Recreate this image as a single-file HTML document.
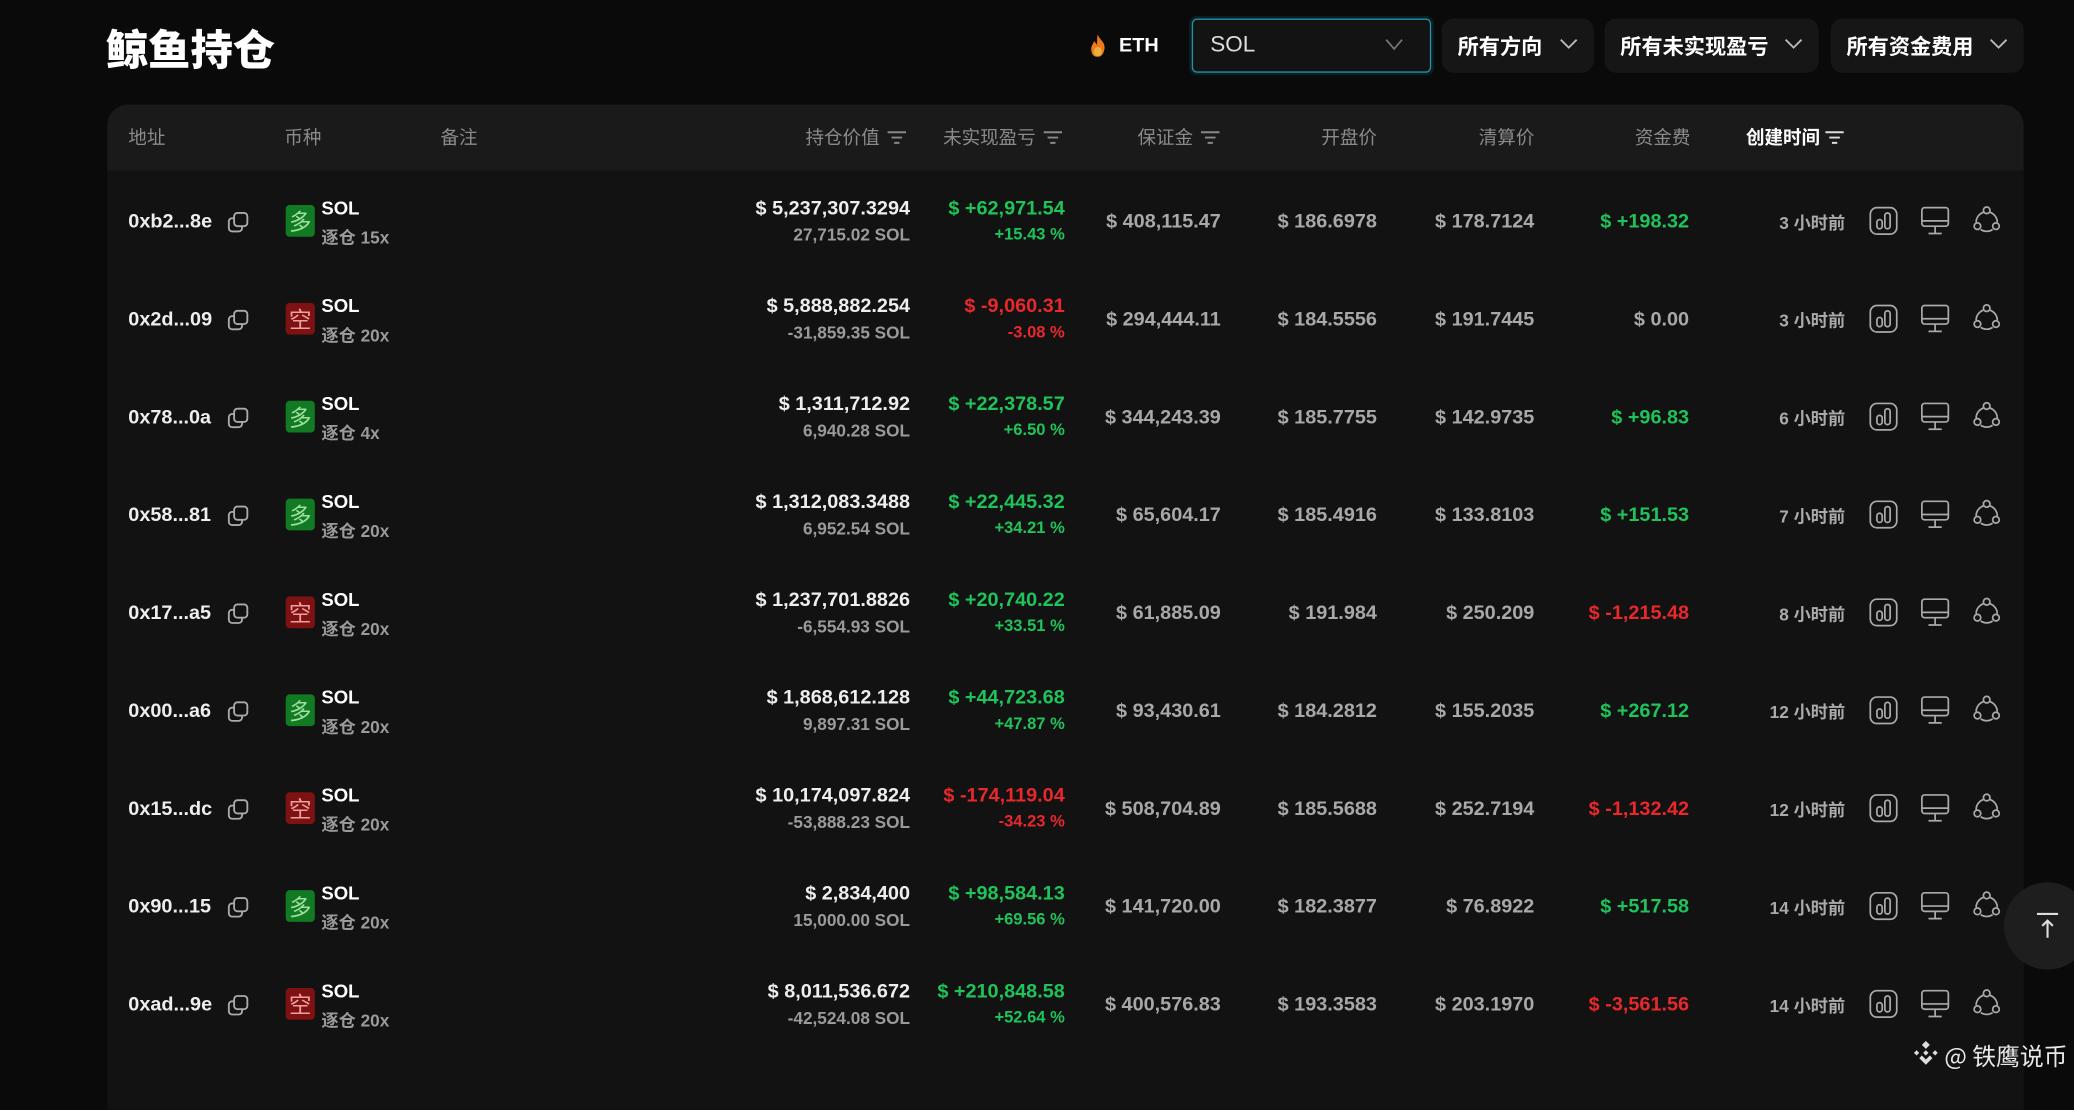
<!DOCTYPE html>
<html><head><meta charset="utf-8"><style>
*{margin:0;padding:0;box-sizing:border-box}
html,body{width:2074px;height:1078px;overflow:hidden;background:#0a0a0a}
#w{position:absolute;left:0;top:0;width:1568px;height:815px;transform:scale(1.32270);transform-origin:0 0;font-family:"Liberation Sans","Noto Sans CJK SC",sans-serif;color:#fff}
.a{position:absolute;white-space:nowrap}
.title{left:80px;top:13px;font-size:32px;font-weight:900;font-family:"Noto Sans CJK SC",sans-serif}
.dd{position:absolute;top:14px;height:41px;background:#161616;border-radius:9px;font-size:16px;font-weight:700;line-height:41px;padding-left:12px;font-family:"Noto Sans CJK SC",sans-serif}
.dd svg{position:absolute;right:12px;top:15px}
.panel{position:absolute;left:81px;top:79px;width:1449px;height:760px;background:#121212;border-radius:16px 16px 0 0;overflow:hidden}
.hd{position:absolute;left:0;top:0;width:100%;height:50px;background:#1a1a1a}
.h{position:absolute;top:16px;font-size:14px;color:#8a8a8a;font-family:"Noto Sans CJK SC",sans-serif;line-height:18px;white-space:nowrap}
.r{text-align:right}
.row{position:absolute;left:0;width:100%;height:74px}
.c{position:absolute;white-space:nowrap}
.g{color:#1fc35a}.rd{color:#e8282b}
.b{font-weight:700}
</style></head><body><div id="w">
<div class="a title">鲸鱼持仓</div>
<svg class="a" style="left:824px;top:26px" width="12" height="17" viewBox="0 0 12 17"><path d="M6 0C7 4 12 6 11 11C10.5 15 8 17 6 17C3 17 1 15 1 11C1 8 3 7 3 5C4 6 5 7 5 8C6 6 5 3 6 0Z" fill="#f07a1a"/><ellipse cx="6" cy="13" rx="3" ry="3.5" fill="#e8b040"/></svg>
<div class="a b" style="left:846px;top:26px;font-size:15px">ETH</div>
<div class="a" style="left:901px;top:14px;width:181px;height:41px;border:1.5px solid #1f93a6;border-radius:4px;background:#131313;box-shadow:0 0 0 2px #0d1e22"><span style="position:absolute;left:13px;top:9px;font-size:17px;color:#ddd">SOL</span><svg style="position:absolute;right:20px;top:14px" width="14" height="9"><path d="M1 1L7 8L13 1" stroke="#777" fill="none" stroke-width="1.3"/></svg></div>
<div class="dd" style="left:1090px;width:115px">所有方向<svg width="14" height="9"><path d="M1 1L7 7L13 1" stroke="#bbb" fill="none" stroke-width="1.4"/></svg></div>
<div class="dd" style="left:1213px;width:162px">所有未实现盈亏<svg width="14" height="9"><path d="M1 1L7 7L13 1" stroke="#bbb" fill="none" stroke-width="1.4"/></svg></div>
<div class="dd" style="left:1384px;width:146px">所有资金费用<svg width="14" height="9"><path d="M1 1L7 7L13 1" stroke="#bbb" fill="none" stroke-width="1.4"/></svg></div>
<div class="panel">
<div class="hd">
<div class="h" style="left:16px">地址</div>
<div class="h" style="left:134px">币种</div>
<div class="h" style="left:252px">备注</div>
<div class="h r" style="right:865px">持仓价值</div>
<div class="h r" style="right:747px">未实现盈亏</div>
<div class="h r" style="right:628px">保证金</div>
<div class="h r" style="right:489px">开盘价</div>
<div class="h r" style="right:370px">清算价</div>
<div class="h r" style="right:252px">资金费</div>
<div class="h b" style="left:1239px;color:#fff">创建时间</div>
<svg style="position:absolute;left:590px;top:20px" width="14" height="10"><path d="M0 1H14M3 5H11M5 9H9" stroke="#888" stroke-width="1.5"/></svg>
<svg style="position:absolute;left:708px;top:20px" width="14" height="10"><path d="M0 1H14M3 5H11M5 9H9" stroke="#888" stroke-width="1.5"/></svg>
<svg style="position:absolute;left:827px;top:20px" width="14" height="10"><path d="M0 1H14M3 5H11M5 9H9" stroke="#888" stroke-width="1.5"/></svg>
<svg style="position:absolute;left:1299px;top:20px" width="14" height="10"><path d="M0 1H14M3 5H11M5 9H9" stroke="#ddd" stroke-width="1.5"/></svg>
</div>
<div id="rows"></div>
</div>
<div class="a" style="left:1515px;top:667px;width:66px;height:66px;border-radius:50%;background:#1e1e1e"><svg style="position:absolute;left:23px;top:22px" width="20" height="22"><path d="M2 2H18M10 20V7M6 11L10 7L14 11" stroke="#ddd" stroke-width="1.6" fill="none"/></svg></div>
<svg class="a" style="left:1446px;top:786px" width="20" height="20" viewBox="0 0 20 20" fill="#ddd"><path d="M10 1L13 4L10 7L7 4Z M1 10L3 8L5 10L3 12Z M15 10L17 8L19 10L17 12Z M10 19L5 14L7 12L10 15L13 12L15 14Z M10 8L12 10L10 12L8 10Z"/></svg>
<div class="a" style="left:1470px;top:785px;font-size:18px;color:#e8e8e8;font-family:'Noto Sans CJK SC',sans-serif">@ 铁鹰说币</div>
</div>
<script>
const d=[
["0xb2...8e",1,"15x","$ 5,237,307.3294","27,715.02 SOL",1,"$ +62,971.54","+15.43 %","$ 408,115.47","$ 186.6978","$ 178.7124",1,"$ +198.32","3 小时前"],
["0x2d...09",0,"20x","$ 5,888,882.254","-31,859.35 SOL",0,"$ -9,060.31","-3.08 %","$ 294,444.11","$ 184.5556","$ 191.7445",2,"$ 0.00","3 小时前"],
["0x78...0a",1,"4x","$ 1,311,712.92","6,940.28 SOL",1,"$ +22,378.57","+6.50 %","$ 344,243.39","$ 185.7755","$ 142.9735",1,"$ +96.83","6 小时前"],
["0x58...81",1,"20x","$ 1,312,083.3488","6,952.54 SOL",1,"$ +22,445.32","+34.21 %","$ 65,604.17","$ 185.4916","$ 133.8103",1,"$ +151.53","7 小时前"],
["0x17...a5",0,"20x","$ 1,237,701.8826","-6,554.93 SOL",1,"$ +20,740.22","+33.51 %","$ 61,885.09","$ 191.984","$ 250.209",0,"$ -1,215.48","8 小时前"],
["0x00...a6",1,"20x","$ 1,868,612.128","9,897.31 SOL",1,"$ +44,723.68","+47.87 %","$ 93,430.61","$ 184.2812","$ 155.2035",1,"$ +267.12","12 小时前"],
["0x15...dc",0,"20x","$ 10,174,097.824","-53,888.23 SOL",0,"$ -174,119.04","-34.23 %","$ 508,704.89","$ 185.5688","$ 252.7194",0,"$ -1,132.42","12 小时前"],
["0x90...15",1,"20x","$ 2,834,400","15,000.00 SOL",1,"$ +98,584.13","+69.56 %","$ 141,720.00","$ 182.3877","$ 76.8922",1,"$ +517.58","14 小时前"],
["0xad...9e",0,"20x","$ 8,011,536.672","-42,524.08 SOL",1,"$ +210,848.58","+52.64 %","$ 400,576.83","$ 193.3583","$ 203.1970",0,"$ -3,561.56","14 小时前"]];
let h="";
d.forEach((r,i)=>{const t=53+i*74;const cl=x=>x==1?"g":x==0?"rd":"";
h+=`<div class="row" style="top:${t}px">
<div class="c b" style="left:16px;top:27px;font-size:15px;color:#eee">${r[0]}</div>
<svg class="c" style="left:91px;top:28px" width="16" height="16" viewBox="0 0 16 16" fill="none" stroke="#aaa" stroke-width="1.4"><rect x="5" y="1" width="10" height="10" rx="2.5"/><path d="M5 5H3.5A2.5 2.5 0 0 0 1 7.5V12.5A2.5 2.5 0 0 0 3.5 15H8.5A2.5 2.5 0 0 0 11 12.5V11"/></svg>
<div class="c" style="left:135px;top:23px;width:22px;height:24px;border-radius:3px;background:${r[1]?"#127a22":"#7e1212"};color:${r[1]?"#9fdf9f":"#f0a0a0"};font-size:17px;line-height:24px;text-align:center;font-family:'Noto Sans CJK SC',sans-serif">${r[1]?"多":"空"}</div>
<div class="c b" style="left:162px;top:17px;font-size:14px">SOL</div>
<div class="c b" style="left:162px;top:37px;font-size:13px;color:#9a9a9a">逐仓 ${r[2]}</div>
<div class="c b r" style="right:842px;top:17px;font-size:15px;color:#eee">${r[3]}</div>
<div class="c b r" style="right:842px;top:38px;font-size:13px;color:#9a9a9a">${r[4]}</div>
<div class="c b r ${cl(r[5])}" style="right:725px;top:17px;font-size:15px">${r[6]}</div>
<div class="c b r ${cl(r[5])}" style="right:725px;top:38px;font-size:12.5px">${r[7]}</div>
<div class="c b r" style="right:607px;top:27px;font-size:15px;color:#a8a8a8">${r[8]}</div>
<div class="c b r" style="right:489px;top:27px;font-size:15px;color:#a8a8a8">${r[9]}</div>
<div class="c b r" style="right:370px;top:27px;font-size:15px;color:#a8a8a8">${r[10]}</div>
<div class="c b r ${cl(r[11])}" style="right:253px;top:27px;font-size:15px;${r[11]==2?"color:#a8a8a8":""}">${r[12]}</div>
<div class="c b r" style="right:135px;top:26px;font-size:13px;color:#aaa">${r[13]}</div>
<svg class="c" style="left:1332px;top:24px" width="22" height="22" viewBox="0 0 22 22" fill="none" stroke="#aaa" stroke-width="1.3"><rect x="1" y="1" width="20" height="20" rx="5"/><rect x="6" y="10" width="4" height="7" rx="2"/><rect x="12" y="5" width="4" height="12" rx="2"/></svg>
<svg class="c" style="left:1371px;top:24px" width="22" height="22" viewBox="0 0 22 22" fill="none" stroke="#aaa" stroke-width="1.3"><rect x="1" y="1" width="20" height="14" rx="2"/><path d="M1 11H21M11 15V20M6 20.5H16"/></svg>
<svg class="c" style="left:1410px;top:23px" width="22" height="22" viewBox="0 0 22 22" fill="none" stroke="#aaa" stroke-width="1.3"><circle cx="11" cy="4" r="2.5"/><circle cx="4" cy="16" r="2.5"/><circle cx="18" cy="16" r="2.5"/><path d="M8.5 5.5A8 8 0 0 0 3 13M13.5 5.5A8 8 0 0 1 19 13M6.5 18.5A8 8 0 0 0 15.5 18.5"/></svg>
</div>`});
document.getElementById("rows").innerHTML=h;
</script>
</body></html>
